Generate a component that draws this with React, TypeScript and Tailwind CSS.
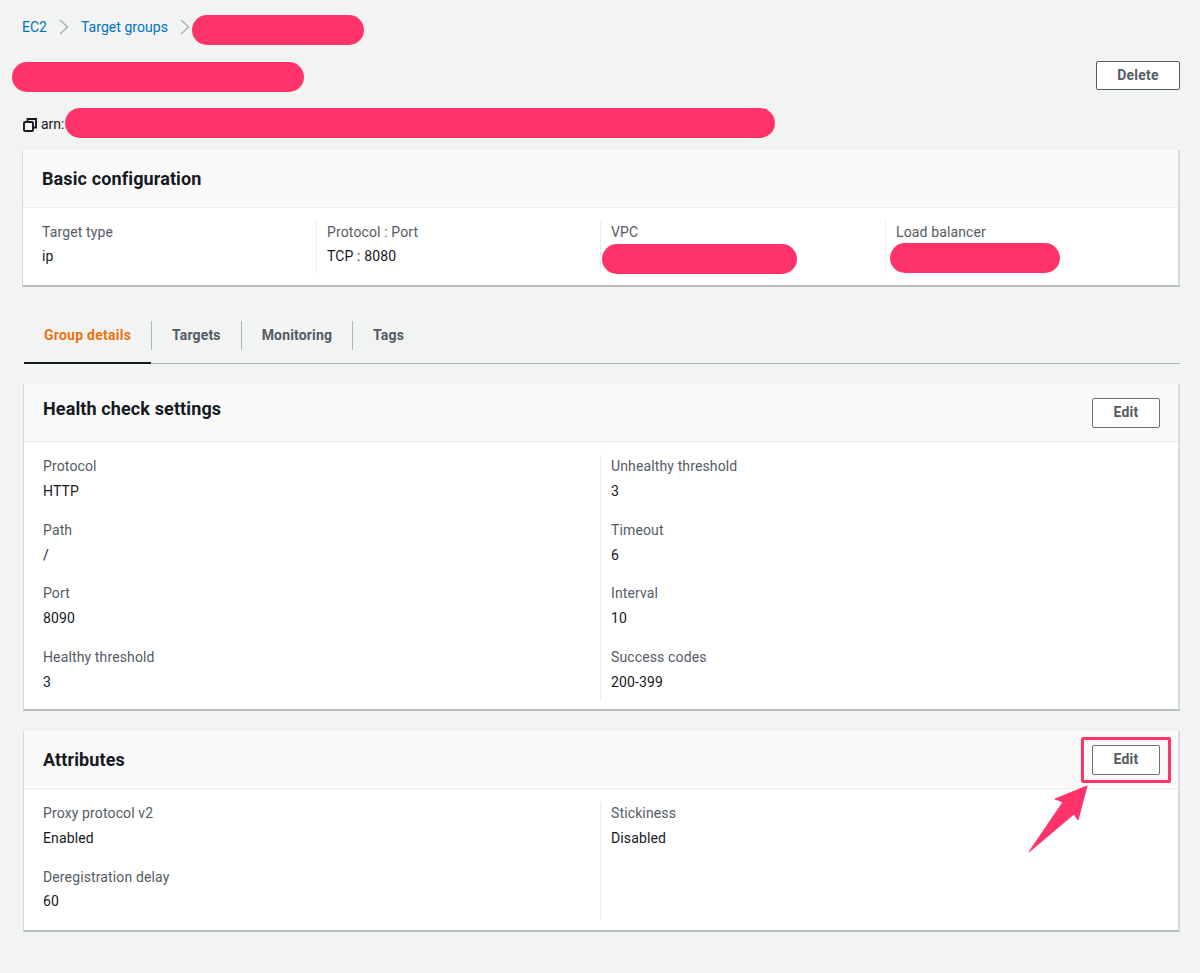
import type { ReactNode } from 'react';

const font = { fontFamily: 'Roboto, "Noto Sans", sans-serif' };

function Marker({ className }: { className: string }) {
  return <div className={`h-[30px] rounded-[15px] bg-[#ff3369] ${className}`} />;
}

function Chevron() {
  return (
    <svg width="12" height="16" viewBox="0 0 12 16" fill="none" stroke="#aab7b8" strokeWidth="1.6">
      <path d="M2 1l7.500 7L2 15" />
    </svg>
  );
}

function CopyIcon() {
  return (
    <svg width="14" height="14" viewBox="0 0 14 14" fill="none" stroke="#16191f" strokeWidth="1.9">
      <rect x="1" y="4" width="9" height="9" rx="1" />
      <path d="M4.500 3.500V1h8.500v8.500H10.500" />
    </svg>
  );
}

function EditButton() {
  return (
    <button className="h-[30px] w-[68px] rounded-[2px] border border-[#687078] bg-white text-[14px] font-bold tracking-[0.25px] text-[#545b64]">
      Edit
    </button>
  );
}

function Field({ label, value, valueClass = 'mt-[3px]' }: { label: string; value: string; valueClass?: string }) {
  return (
    <div>
      <div className="h-[22px] text-[14px] leading-[22px] tracking-[0.13px] text-[#545b64]">{label}</div>
      <div className={`h-[22px] text-[14px] leading-[22px] tracking-[0.13px] text-[#16191f] ${valueClass}`}>{value}</div>
    </div>
  );
}

function Card({
  title,
  action,
  titleClass = '',
  children,
}: {
  title: string;
  action?: ReactNode;
  titleClass?: string;
  children: ReactNode;
}) {
  return (
    <section className="border-b-2 border-l border-r-2 border-[#d5dbdb] border-b-[#b6bec0] bg-white">
      <header className="flex h-[58px] items-center justify-between border-b border-[#eaeded] bg-[#fafafa] pl-[19px] pr-[18px]">
        <h2 className={`text-[18px] font-bold tracking-[0.12px] text-[#16191f] ${titleClass}`}>{title}</h2>
        {action}
      </header>
      {children}
    </section>
  );
}

function Summary() {
  return (
    <div className="grid h-[77px] grid-cols-[293px_284px_285px_1fr] pt-[13px]">
      <div className="h-[52px] pl-[19px]">
        <Field label="Target type" value="ip" valueClass="mt-[2px]" />
      </div>
      <div className="h-[52px] border-l border-[#eaeded] pl-[10px]">
        <Field label="Protocol : Port" value="TCP : 8080" valueClass="mt-[2px]" />
      </div>
      <div className="h-[52px] border-l border-[#eaeded] pl-[10px]">
        <div className="text-[14px] leading-[22px] tracking-[0.13px] text-[#545b64]">VPC</div>
        <Marker className="-ml-[9px] mt-[1px] w-[195px]" />
      </div>
      <div className="h-[52px] border-l border-[#eaeded] pl-[10px]">
        <div className="text-[14px] leading-[22px] tracking-[0.13px] text-[#545b64]">Load balancer</div>
        <Marker className="-ml-[6px] w-[170px]" />
      </div>
    </div>
  );
}

function Tabs() {
  const tabs = ['Targets', 'Monitoring', 'Tags'];
  return (
    <div className="ml-[2px] mt-[34px] flex h-[43px] items-start border-b border-[#aab7b8]">
      <div className="h-[43px] w-[127px] border-b-2 border-[#16191f] pl-[20px] pt-[2px] text-[14px] font-bold leading-[24px] tracking-[0.25px] text-[#ec7211]">
        Group details
      </div>
      {tabs.map((tab) => (
        <div key={tab} className="h-[29px] border-l border-[#aab7b8] px-[20px] pt-[2px] text-[14px] font-bold leading-[24px] tracking-[0.15px] text-[#545b64]">
          {tab}
        </div>
      ))}
    </div>
  );
}

function HealthCheck() {
  const left = [
    ['Protocol', 'HTTP'],
    ['Path', '/'],
    ['Port', '8090'],
    ['Healthy threshold', '3'],
  ];
  const right = [
    ['Unhealthy threshold', '3'],
    ['Timeout', '6'],
    ['Interval', '10'],
    ['Success codes', '200-399'],
  ];
  return (
    <div className="grid h-[267px] grid-cols-[576px_1fr] pt-[13px]">
      <div className="flex h-[246px] flex-col gap-[16.5px] pl-[19px]">
        {left.map(([l, v]) => <Field key={l} label={l} value={v} />)}
      </div>
      <div className="flex h-[246px] flex-col gap-[16.5px] border-l border-[#eaeded] pl-[10px]">
        {right.map(([l, v]) => <Field key={l} label={l} value={v} />)}
      </div>
    </div>
  );
}

function Attributes() {
  return (
    <div className="grid h-[141px] grid-cols-[576px_1fr] pt-[13px]">
      <div className="flex h-[118px] flex-col gap-[17px] pl-[19px]">
        <Field label="Proxy protocol v2" value="Enabled" />
        <Field label="Deregistration delay" value="60" valueClass="mt-[2px]" />
      </div>
      <div className="h-[118px] border-l border-[#eaeded] pl-[10px]">
        <Field label="Stickiness" value="Disabled" />
      </div>
    </div>
  );
}

export default function App() {
  return (
    <div className="relative h-[973px] w-[1200px] overflow-hidden bg-[#f2f3f3] pl-[22px] pr-[20px]" style={font}>
      <nav className="flex h-[62px] items-start pt-[15px] text-[14px] text-[#0073bb]">
        <span className="mt-[1px] leading-[22px]">EC2</span>
        <span className="ml-[11px] mt-[4px]"><Chevron /></span>
        <span className="ml-[11px] mt-[1px] leading-[22px] tracking-[0.05px]">Target groups</span>
        <span className="ml-[11px] mt-[4px]"><Chevron /></span>
        <Marker className="ml-[1px] w-[172px]" />
      </nav>
      <div className="-ml-[10px] flex h-[46px] items-start justify-between">
        <Marker className="w-[292px]" />
        <button className="-mt-px h-[29px] w-[84px] rounded-[2px] border border-[#545b64] bg-white text-[14px] font-bold tracking-[0.25px] text-[#545b64]">
          Delete
        </button>
      </div>
      <div className="flex h-[42px] items-start">
        <span className="mt-[10px] ml-px"><CopyIcon /></span>
        <span className="ml-[4px] mt-[5px] text-[14px] leading-[22px] text-[#16191f]">arn:</span>
        <Marker className="ml-px w-[710px]" />
      </div>
      <Card title="Basic configuration">
        <Summary />
      </Card>
      <Tabs />
      <div className="ml-px mt-[20px]">
        <Card title="Health check settings" titleClass="-mt-[8px]" action={<EditButton />}>
          <HealthCheck />
        </Card>
      </div>
      <div className="ml-px mt-[20px]">
        <Card title="Attributes" action={<EditButton />}>
          <Attributes />
        </Card>
      </div>
      {/* annotation drawn over the screenshot */}
      <div className="absolute left-[1081px] top-[737px] h-[46px] w-[90px] rounded-[2px] border-[3px] border-[#ff3369]" />
      <svg className="absolute left-[1025px] top-[783px]" width="66" height="74" viewBox="0 0 66 74" fill="#ff3369" stroke="#ff3369" strokeLinejoin="round">
        <path d="M62 3L30 16L38 19L4 69L49 31L53 37Z" />
      </svg>
    </div>
  );
}
